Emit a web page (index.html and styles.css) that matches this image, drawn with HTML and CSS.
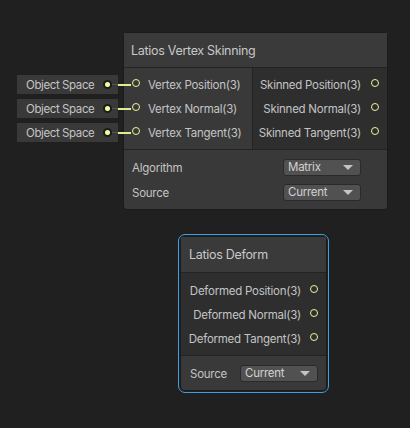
FILE: index.html
```html
<!DOCTYPE html>
<html lang="en">
<head>
  <meta charset="UTF-8">
  <title>Shader Graph - Latios</title>
  <link rel="stylesheet" href="styles.css">
</head>
<body>
  <div class="canvas">

    <!-- inline inputs feeding the skinning node -->
    <div class="inline-input in-1">
      <span>Object Space</span>
      <span class="inline-dot"></span>
      <span class="inline-wire"></span>
    </div>
    <div class="inline-input in-2">
      <span>Object Space</span>
      <span class="inline-dot"></span>
      <span class="inline-wire"></span>
    </div>
    <div class="inline-input in-3">
      <span>Object Space</span>
      <span class="inline-dot"></span>
      <span class="inline-wire"></span>
    </div>

    <div class="node node-skinning">
      <div class="node-title">Latios Vertex Skinning</div>
      <div class="node-ports">
        <div class="port-col inputs">
          <div class="port"><span class="port-circle"></span>Vertex Position(3)</div>
          <div class="port"><span class="port-circle"></span>Vertex Normal(3)</div>
          <div class="port"><span class="port-circle"></span>Vertex Tangent(3)</div>
        </div>
        <div class="port-col outputs">
          <div class="port">Skinned Position(3)<span class="port-circle"></span></div>
          <div class="port">Skinned Normal(3)<span class="port-circle"></span></div>
          <div class="port">Skinned Tangent(3)<span class="port-circle"></span></div>
        </div>
      </div>
      <div class="node-settings">
        <div class="setting">
          <span class="setting-label">Algorithm</span>
          <div class="dropdown">Matrix</div>
        </div>
        <div class="setting">
          <span class="setting-label">Source</span>
          <div class="dropdown">Current</div>
        </div>
      </div>
    </div>

    <div class="selected">
      <div class="node node-deform">
        <div class="node-title">Latios Deform</div>
        <div class="node-ports">
          <div class="port-col outputs">
            <div class="port">Deformed Position(3)<span class="port-circle"></span></div>
            <div class="port">Deformed Normal(3)<span class="port-circle"></span></div>
            <div class="port">Deformed Tangent(3)<span class="port-circle"></span></div>
          </div>
        </div>
        <div class="node-settings">
          <div class="setting">
            <span class="setting-label">Source</span>
            <div class="dropdown">Current</div>
          </div>
        </div>
      </div>
    </div>

  </div>
</body>
</html>
```

FILE: styles.css
```css
html, body {
  margin: 0;
  padding: 0;
  width: 100%;
  height: 100%;
  background: #202020;
  color: #c4c4c4;
  font-family: Inter, "Noto Sans", sans-serif;
  font-size: 11.5px;
  letter-spacing: -0.25px;
}
.canvas {
  position: relative;
  width: 410px;
  height: 428px;
  overflow: hidden;
  white-space: nowrap;
}

/* inline input values on the left */
.inline-input {
  position: absolute;
  z-index: 2;
  left: 17px;
  width: 101px;
  height: 19px;
  box-sizing: border-box;
  padding-left: 9px;
  padding-top: 1px;
  background: #393939;
  display: flex;
  align-items: center;
  letter-spacing: -0.4px;
}
.in-1 { top: 75px; }
.in-2 { top: 99px; }
.in-3 { top: 123px; }
.inline-dot {
  position: absolute;
  left: 88px;
  top: 7px;
  width: 5px;
  height: 5px;
  border-radius: 50%;
  background: #f6ff9a;
  box-shadow: 0 0 0 2px #1c1c1c;
}
.inline-dot::after {
  content: "";
  position: absolute;
  left: 7px;
  top: 2px;
  width: 6px;
  height: 1px;
  background: #55574a;
}
.inline-wire {
  position: absolute;
  left: 101px;
  top: 9px;
  width: 13px;
  height: 2px;
  background: #e4ea8f;
}

/* nodes */
.node {
  position: absolute;
  background: #393939;
  border: 1px solid #1b1b1b;
  border-radius: 4px;
  display: flex;
  flex-direction: column;
  box-sizing: border-box;
}
.node-title {
  height: 36px;
  display: flex;
  align-items: center;
  padding-left: 7px;
  font-size: 12.5px;
  letter-spacing: -0.3px;
  color: #c8c8c8;
  border-bottom: 1px solid #232323;
  background: #3a3a3a;
}
.node-ports {
  display: flex;
  border-bottom: 1px solid #232323;
}
.port-col {
  padding: 4px 0 5px;
  display: flex;
  flex-direction: column;
}
.port-col.inputs {
  width: 128px;
  background: #393939;
  border-right: 1px solid #232323;
}
.port-col.outputs {
  flex: 1;
  background: #2e2e2e;
}
.port {
  height: 24px;
  display: flex;
  align-items: center;
  padding-top: 1px;
  box-sizing: border-box;
}
.inputs .port {
  padding-left: 8px;
  gap: 8px;
}
.outputs .port {
  justify-content: flex-end;
  padding-right: 8px;
  gap: 10px;
}
.port-circle {
  position: relative;
  width: 6px;
  height: 6px;
  border: 1.5px solid #f0f596;
  border-radius: 50%;
  flex-shrink: 0;
  margin-top: -3px;
}

.node-settings {
  padding: 9px 0 8px 8px;
  display: flex;
  flex-direction: column;
  gap: 8px;
}
.setting {
  height: 17px;
  display: flex;
  align-items: center;
}
.setting-label {
  width: 151px;
}
.dropdown {
  position: relative;
  width: 78px;
  height: 17px;
  box-sizing: border-box;
  padding-left: 4px;
  line-height: 15px;
  background: #515151;
  border: 1px solid #2a2a2a;
  border-radius: 3px;
  color: #d2d2d2;
}
.dropdown::after {
  content: "";
  position: absolute;
  right: 7px;
  top: 5px;
  border-left: 5px solid transparent;
  border-right: 5px solid transparent;
  border-top: 5px solid #c4c4c4;
}

.node-skinning {
  left: 123px;
  top: 32px;
  width: 265px;
  height: 178px;
}

/* selected node with blue outline */
.selected {
  position: absolute;
  left: 178px;
  top: 234px;
  width: 151px;
  height: 159px;
  border: 1px solid #3d9fe0;
  border-radius: 7px;
  box-sizing: border-box;
}
.node-deform {
  left: 1px;
  top: 1px;
  right: 1px;
  bottom: 1px;
}
.node-deform .node-title {
  height: 37px;
  padding-left: 8px;
}
.node-deform .port-col.outputs {
  padding: 5px 0 5px;
}
.node-deform .outputs .port {
  padding-right: 8px;
  gap: 9px;
}
.node-deform .setting-label {
  width: 50px;
  padding-left: 1px;
}
```
